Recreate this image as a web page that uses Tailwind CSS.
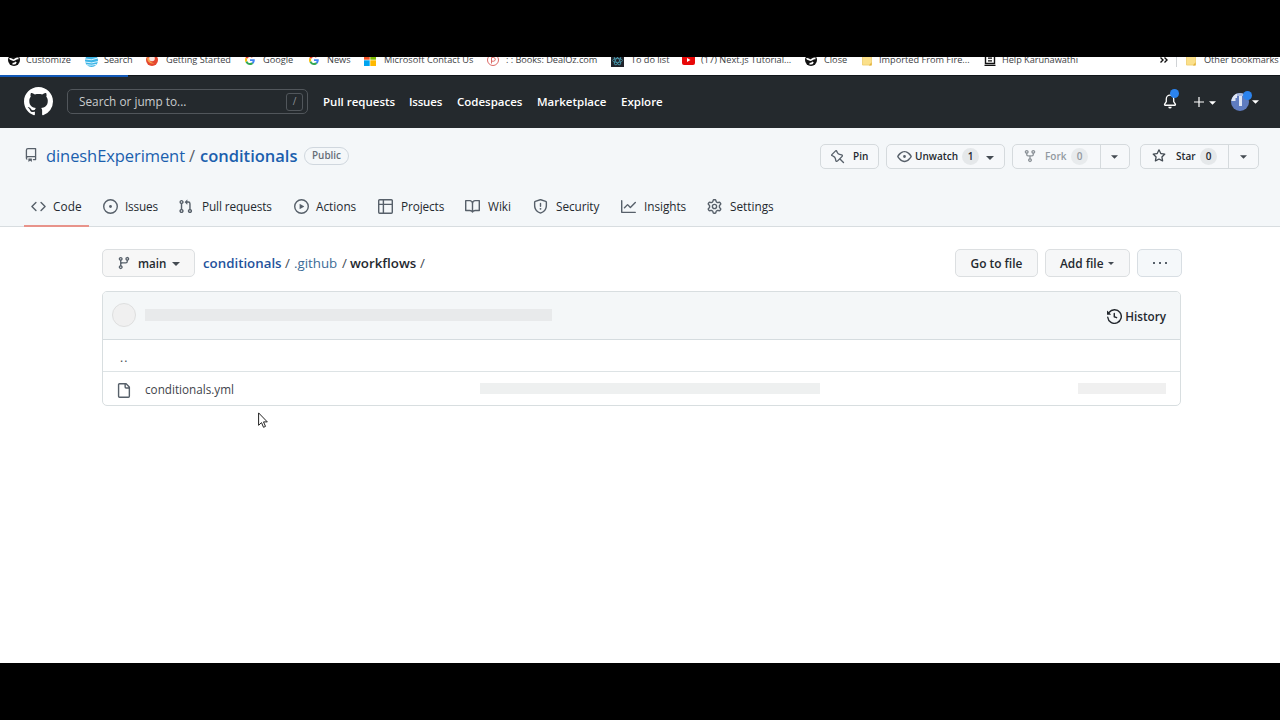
<!DOCTYPE html>
<html lang="en">
<head>
<meta charset="utf-8">
<title>conditionals/.github/workflows</title>
<script src="https://cdn.jsdelivr.net/npm/@tailwindcss/browser@4"></script>
</head>
<body class="w-[1280px] h-[720px] overflow-hidden bg-black font-['Open_Sans','Noto_Sans',sans-serif] text-[#24292f] whitespace-nowrap">
<svg class="hidden">
  <symbol id="globe" viewBox="0 0 12 12"><circle cx="6" cy="6" r="6" fill="#111"/><path d="M1.500 5c1.500-1 3 1.500 4.500 1S8 4 10.500 4.500M4.500 9.500c1.500.5 3-.5 3.500-1.500" fill="none" stroke="#fff" stroke-width="1.800"/></symbol>
  <symbol id="google" viewBox="0 0 48 48"><path fill="#ea4335" d="M24 9.500c3.540 0 6.710 1.220 9.210 3.600l6.850-6.850C35.900 2.380 30.470 0 24 0 14.620 0 6.510 5.380 2.560 13.220l7.980 6.190C12.430 13.720 17.740 9.500 24 9.500z"/><path fill="#4285f4" d="M46.980 24.550c0-1.570-.15-3.090-.38-4.550H24v9.020h12.940c-.58 2.960-2.260 5.480-4.780 7.180l7.730 6c4.510-4.180 7.090-10.360 7.090-17.650z"/><path fill="#fbbc05" d="M10.530 28.590c-.48-1.450-.76-2.990-.76-4.590s.27-3.140.76-4.590l-7.980-6.190C.92 16.460 0 20.120 0 24s.92 7.540 2.560 10.780l7.970-6.190z"/><path fill="#34a853" d="M24 48c6.480 0 11.930-2.130 15.890-5.810l-7.730-6c-2.150 1.450-4.920 2.300-8.160 2.300-6.260 0-11.570-4.220-13.470-9.910l-7.980 6.190C6.510 42.620 14.620 48 24 48z"/></symbol>
  <symbol id="folder" viewBox="0 0 11 12"><path d="M.5 0h10v11.500H.5z" fill="#fbe08a" stroke="#f0cf72"/><path d="M7.500 12l3-3.500V12z" fill="#e3b341"/></symbol>
  <symbol id="caret" viewBox="0 0 8 4"><path d="M0 0h8L4 4z" fill="currentColor"/></symbol>
</svg>

<div class="h-[57px]"></div>

<!-- Bookmarks bar -->
<div class="h-[18px] bg-white overflow-hidden">
  <div class="flex items-center h-[18px] -mt-[6px] text-[9.2px] text-[#3c4043]">
    <svg class="ml-[8px] size-[12px] shrink-0"><use href="#globe"/></svg>
    <span class="ml-[6px] w-[59px]">Customize</span>
    <svg class="size-[13px] shrink-0" viewBox="0 0 13 13"><circle cx="6.500" cy="6.500" r="6.500" fill="#3db5e6"/><path d="M0 5q6 2 13-1M0 8q7 2 13-.5M2 10.800q5 1 9-.4" fill="none" stroke="#d8f3ff"/></svg>
    <span class="ml-[6px] w-[42px] tracking-[-0.1px]">Search</span>
    <svg class="size-[12px] shrink-0" viewBox="0 0 12 12"><circle cx="6" cy="6" r="6" fill="#e5472f"/><path d="M1.500 3a5 5 0 0 0 7 6c-3 0-5-2-5-5z" fill="#f6a04a"/><circle cx="6" cy="4.500" r="2.800" fill="#f6e4e0"/></svg>
    <span class="ml-[8px] w-[79px]">Getting Started</span>
    <svg class="size-[10px] shrink-0"><use href="#google"/></svg>
    <span class="ml-[8px] w-[46px]">Google</span>
    <svg class="size-[10px] shrink-0"><use href="#google"/></svg>
    <span class="ml-[8px] w-[37px]">News</span>
    <svg class="size-[12px] shrink-0" viewBox="0 0 12 12"><path fill="#f25022" d="M0 0h5.700v5.700H0z"/><path fill="#7fba00" d="M6.300 0H12v5.700H6.300z"/><path fill="#00a4ef" d="M0 6.300h5.700V12H0z"/><path fill="#ffb900" d="M6.300 6.300H12V12H6.300z"/></svg>
    <span class="ml-[8px] w-[103px]">Microsoft Contact Us</span>
    <svg class="size-[12px] shrink-0" viewBox="0 0 12 12" fill="none" stroke="#dc6a66"><circle cx="6" cy="6" r="5.500"/><path d="M4.500 9.500V3.500h2.300a1.900 1.900 0 0 1 0 3.700H4.500"/></svg>
    <span class="ml-[7px] w-[105px] tracking-[-0.04px]">: : Books: DealOz.com</span>
    <svg class="size-[13px] shrink-0" viewBox="0 0 13 13"><path d="M0 0h13v13H0z" fill="#20232a"/><g fill="none" stroke="#4aa3b8" stroke-width=".7"><ellipse cx="6.500" cy="6.500" rx="5" ry="2"/><ellipse cx="6.500" cy="6.500" rx="5" ry="2" transform="rotate(60 6.500 6.500)"/><ellipse cx="6.500" cy="6.500" rx="5" ry="2" transform="rotate(120 6.500 6.500)"/></g></svg>
    <span class="ml-[7px] w-[51px] tracking-[-0.04px]">To do list</span>
    <svg class="w-[13px] h-[10px] shrink-0" viewBox="0 0 13 10"><rect width="13" height="10" rx="2" fill="#e80808"/><path d="M5 3l3.500 2L5 7z" fill="#fff"/></svg>
    <span class="ml-[6px] w-[104px]">(17) Next.js Tutorial...</span>
    <svg class="size-[12px] shrink-0"><use href="#globe"/></svg>
    <span class="ml-[7px] w-[38px]">Close</span>
    <svg class="w-[10px] h-[12px] shrink-0"><use href="#folder"/></svg>
    <span class="ml-[7px] w-[105px]">Imported From Fire...</span>
    <svg class="size-[12px] shrink-0" viewBox="0 0 12 12"><path d="M1.500 1.500h9v8h-9z" fill="none" stroke="#111" stroke-width="1.400"/><path d="M4 4.200h4M4 6.800h4M.5 11.300h11" stroke="#111" stroke-width="1.300"/></svg>
    <span class="ml-[6px] w-[158px] tracking-[-0.04px]">Help Karunawathi</span>
    <svg class="w-[8px] h-[6px] shrink-0 -mt-px" viewBox="0 0 8 6" fill="none" stroke="#111" stroke-width="1.400"><path d="M.5.5L3 3 .5 5.500M4.500.5L7 3 4.500 5.500"/></svg>
    <span class="ml-[8px] w-px h-[14px] bg-[#d0d3d6]"></span>
    <svg class="ml-[9px] w-[10px] h-[12px] shrink-0"><use href="#folder"/></svg>
    <span class="ml-[8px] tracking-[-0.05px]">Other bookmarks</span>
  </div>
</div>

<!-- Global header -->
<header class="relative flex items-center h-[53px] bg-[#24292d] border-t border-[#11161a] pb-px text-white">
  <div class="absolute -top-px left-0 w-[128px] h-[2px] bg-[#1259b8]"></div>
  <svg class="ml-[24px] size-[29px] shrink-0" viewBox="0 0 16 16" fill="#fff"><path d="M8 0C3.580 0 0 3.580 0 8c0 3.540 2.290 6.530 5.470 7.590.4.070.55-.17.55-.38 0-.19-.01-.82-.01-1.490-2.010.37-2.530-.49-2.690-.94-.09-.23-.48-.94-.82-1.130-.28-.15-.68-.52-.01-.53.63-.01 1.080.58 1.230.82.72 1.210 1.870.87 2.330.66.070-.52.28-.87.51-1.070-1.780-.2-3.640-.89-3.640-3.950 0-.87.31-1.590.82-2.150-.08-.2-.36-1.020.08-2.120 0 0 .67-.21 2.200.82.64-.18 1.320-.27 2-.27s1.360.09 2 .27c1.530-1.040 2.200-.82 2.200-.82.44 1.100.16 1.920.08 2.120.51.56.82 1.270.82 2.150 0 3.070-1.870 3.750-3.650 3.950.29.25.54.73.54 1.480 0 1.070-.01 1.930-.01 2.200 0 .21.15.46.55.38A8.010 8.010 0 0 0 16 8c0-4.420-3.580-8-8-8z"/></svg>
  <div class="ml-[14px] w-[241px] h-[25px] flex items-center justify-between rounded-[5px] border border-[#51565b] pl-[11px] pr-[4px]">
    <span class="pt-px text-[11.8px] text-[#c9ccce]">Search or jump to...</span>
    <span class="w-[17px] h-[18px] flex items-center justify-center rounded-[3px] border border-[#51565b] text-[10px] text-[#8d9297]">/</span>
  </div>
  <nav class="ml-[15px] pt-px flex text-[11.5px] font-semibold">
    <span class="w-[86px]">Pull requests</span>
    <span class="w-[48px] tracking-[-0.2px]">Issues</span>
    <span class="w-[80px]">Codespaces</span>
    <span class="w-[84px]">Marketplace</span>
    <span class="w-[42px]">Explore</span>
  </nav>
  <div class="ml-auto mr-[21px] flex items-center">
    <div class="relative w-[14px] h-[15px]">
      <svg class="-ml-px w-[14px] h-[15px]" viewBox="0 0 16 16" fill="#fff"><path d="M8 16a2 2 0 0 0 1.985-1.750c.017-.137-.097-.25-.235-.25h-3.500c-.138 0-.252.113-.235.250A2 2 0 0 0 8 16ZM3 5a5 5 0 0 1 10 0v2.947c0 .05.015.098.042.139l1.703 2.555A1.519 1.519 0 0 1 13.482 13H2.518a1.516 1.516 0 0 1-1.263-2.360l1.703-2.554A.255.255 0 0 0 3 7.947Zm5-3.500A3.500 3.500 0 0 0 4.500 5v2.947c0 .346-.102.683-.294.970l-1.703 2.556a.017.017 0 0 0-.003.010l.001.006c0 .002.002.004.004.006l.006.004.007.001h10.964l.007-.001.006-.004.004-.006.001-.007a.017.017 0 0 0-.003-.01l-1.703-2.554a1.745 1.745 0 0 1-.294-.970V5A3.500 3.500 0 0 0 8 1.500Z"/></svg>
      <span class="absolute -top-[5px] left-[6px] size-[9px] rounded-full bg-[#2b83ee]"></span>
    </div>
    <svg class="ml-[16px] mt-px size-[10px]" viewBox="0 0 10 10" stroke="#fff" stroke-width="1.200"><path d="M5 0v10M0 5h10"/></svg>
    <svg class="ml-[5px] mt-[2px] w-[7px] h-[4px]"><use href="#caret"/></svg>
    <div class="relative ml-[15px] mt-px size-[18px]">
      <svg class="size-[18px]" viewBox="0 0 18 18"><circle cx="9" cy="9" r="9" fill="#5f7cc0"/><path d="M.5 7A9 9 0 0 1 6 .6V5H4.500v3H.3zM8 3h3v10H8z" fill="#dfe6f5"/><path d="M6 .6A9 9 0 0 1 13 1v2H6z" fill="#a9b9de"/></svg>
      <span class="absolute -top-[2px] left-[12px] size-[9px] rounded-full bg-[#2b83ee]"></span>
    </div>
    <svg class="ml-[3px] w-[7px] h-[4px]"><use href="#caret"/></svg>
  </div>
</header>

<!-- Repository header -->
<section class="h-[99px] bg-[#f4f7f9] border-b border-[#d8dde0]">
  <div class="flex items-center h-[57px] pl-[25px] pr-[21px]">
    <svg class="-ml-px mr-px size-[14px] shrink-0 -mt-[3px]" viewBox="0 0 16 16" fill="#57606a"><path d="M2 2.500A2.500 2.500 0 0 1 4.500 0h8.750a.75.75 0 0 1 .75.75v12.500a.75.75 0 0 1-.75.75h-2.500a.75.75 0 0 1 0-1.500h1.750v-2h-8a1 1 0 0 0-.714 1.700.75.75 0 1 1-1.072 1.050A2.495 2.495 0 0 1 2 11.500Zm10.500-1h-8a1 1 0 0 0-1 1v6.708A2.486 2.486 0 0 1 4.500 9h8ZM5 12.250a.25.25 0 0 1 .25-.25h3.500a.25.25 0 0 1 .25.25v3.250a.25.25 0 0 1-.4.200l-1.450-1.087a.249.249 0 0 0-.3 0L5.400 15.700a.25.25 0 0 1-.4-.2Z"/></svg>
    <div class="ml-[7px] flex text-[16.5px] text-[#1b5fae]">
      <span class="w-[143px] tracking-[-0.08px]">dineshExperiment</span>
      <span class="w-[11px] text-[#57606a]">/</span>
      <span class="w-[98px] font-semibold">conditionals</span>
    </div>
    <span class="ml-[6px] -mt-[2px] w-[45px] h-[18px] flex items-center justify-center rounded-full border border-[#d0d7de] text-[9.900px] font-semibold text-[#666e77]">Public</span>

    <div class="ml-auto flex items-center text-[10px] font-semibold">
      <div class="w-[59px] h-[25px] flex items-center rounded-[5px] border border-[#d5dadd] bg-[#f6f8fa] pl-[10px]">
        <svg class="size-[14px] shrink-0" viewBox="0 0 16 16" fill="#57606a"><path d="M4.456.734a1.750 1.750 0 0 1 2.826.504l.613 1.327a3.080 3.080 0 0 0 2.084 1.707l2.454.584c1.332.317 1.800 1.972.832 2.940L11.060 10l3.720 3.720a.75.75 0 1 1-1.060 1.060L10 11.060l-2.204 2.205c-.968.968-2.623.5-2.940-.832l-.584-2.454a3.080 3.080 0 0 0-1.707-2.084l-1.327-.613a1.750 1.750 0 0 1-.504-2.826ZM5.920 1.866a.25.25 0 0 0-.404-.072L1.794 5.516a.25.25 0 0 0 .072.404l1.328.613A4.582 4.582 0 0 1 5.730 9.630l.584 2.454a.25.25 0 0 0 .42.120l5.470-5.470a.25.25 0 0 0-.12-.420L9.630 5.730a4.581 4.581 0 0 1-3.098-2.537Z"/></svg>
        <span class="ml-[8px]">Pin</span>
      </div>
      <div class="ml-[7px] w-[119px] h-[25px] flex items-center rounded-[5px] border border-[#d5dadd] bg-[#f6f8fa] pl-[10px]">
        <svg class="size-[15px] shrink-0" viewBox="0 0 16 16" fill="#57606a"><path d="M8 2c1.981 0 3.671.992 4.933 2.078 1.270 1.091 2.187 2.345 2.637 3.023a1.620 1.620 0 0 1 0 1.798c-.45.678-1.367 1.932-2.637 3.023C11.670 13.008 9.981 14 8 14c-1.981 0-3.671-.992-4.933-2.078C1.797 10.830.88 9.576.43 8.898a1.620 1.620 0 0 1 0-1.798c.45-.677 1.367-1.931 2.637-3.022C4.330 2.992 6.019 2 8 2ZM1.679 7.932a.12.12 0 0 0 0 .136c.411.622 1.241 1.750 2.366 2.717C5.176 11.758 6.527 12.500 8 12.500c1.473 0 2.825-.742 3.955-1.715 1.124-.967 1.954-2.096 2.366-2.717a.12.12 0 0 0 0-.136c-.412-.621-1.242-1.750-2.366-2.717C10.824 4.242 9.473 3.500 8 3.500c-1.473 0-2.825.742-3.955 1.715-1.124.967-1.954 2.096-2.366 2.717ZM8 9.500a1.500 1.500 0 1 1 0-3 1.500 1.500 0 0 1 0 3Z"/></svg>
        <span class="ml-[3px] w-[47px]">Unwatch</span>
        <span class="size-[17px] rounded-full bg-[#e5e8ea] flex items-center justify-center">1</span>
        <svg class="ml-[7px] mt-[2px] w-[8px] h-[4px] text-[#444b52]"><use href="#caret"/></svg>
      </div>
      <div class="ml-[7px] w-[118px] h-[25px] flex items-center rounded-[5px] border border-[#d5dadd] bg-[#f6f8fa] text-[#9299a0]">
        <div class="w-[88px] h-full flex items-center border-r border-[#d5dadd] pl-[10px]">
          <svg class="mr-px size-[14px] shrink-0 -mt-px" viewBox="0 0 16 16" fill="#8c9298"><path d="M5 5.372v.878c0 .414.336.75.75.75h4.500a.75.75 0 0 0 .75-.75v-.878a2.250 2.250 0 1 1 1.500 0v.878a2.250 2.250 0 0 1-2.250 2.250h-1.500v2.128a2.251 2.251 0 1 1-1.500 0V8.500h-1.500A2.250 2.250 0 0 1 3.500 6.250v-.878a2.250 2.250 0 1 1 1.500 0ZM5 3.250a.75.75 0 1 0-1.500 0 .75.75 0 0 0 1.500 0Zm6.750.75a.75.75 0 1 0 0-1.500.75.75 0 0 0 0 1.500Zm-3 8.750a.75.75 0 1 0-1.500 0 .75.75 0 0 0 1.500 0Z"/></svg>
          <span class="ml-[7px] w-[26px]">Fork</span>
          <span class="size-[17px] rounded-full bg-[#e8ebed] flex items-center justify-center">0</span>
        </div>
        <svg class="ml-[10px] mt-px w-[7px] h-[4px] text-[#444b52]"><use href="#caret"/></svg>
      </div>
      <div class="ml-[10px] w-[119px] h-[25px] flex items-center rounded-[5px] border border-[#d5dadd] bg-[#f6f8fa]">
        <div class="w-[88px] h-full flex items-center border-r border-[#d5dadd] pl-[11px]">
          <svg class="size-[14px] shrink-0 -mt-px" viewBox="0 0 16 16" fill="#444c54"><path d="M8 .25a.75.75 0 0 1 .673.418l1.882 3.815 4.210.612a.75.75 0 0 1 .416 1.279l-3.046 2.970.719 4.192a.751.751 0 0 1-1.088.791L8 12.347l-3.766 1.980a.75.75 0 0 1-1.088-.790l.72-4.194L.818 6.374a.75.75 0 0 1 .416-1.280l4.210-.611L7.327.668A.75.75 0 0 1 8 .25Zm0 2.445L6.615 5.500a.75.75 0 0 1-.564.410l-3.097.450 2.240 2.184a.75.75 0 0 1 .216.664l-.528 3.084 2.769-1.456a.75.75 0 0 1 .698 0l2.770 1.456-.53-3.084a.75.75 0 0 1 .216-.664l2.240-2.183-3.096-.450a.75.75 0 0 1-.564-.410L8 2.694Z"/></svg>
          <span class="ml-[10px] w-[24px]">Star</span>
          <span class="size-[17px] rounded-full bg-[#e5e8ea] flex items-center justify-center">0</span>
        </div>
        <svg class="ml-[11px] mt-px w-[7px] h-[4px] text-[#444b52]"><use href="#caret"/></svg>
      </div>
    </div>
  </div>

  <nav class="flex h-[42px] pl-[24px] text-[11.8px]">
    <div class="w-[65px] h-[42px] pl-[7px] pt-[2px] flex items-center border-b-2 border-[#e8938a]">
      <svg class="size-[15px] shrink-0" viewBox="0 0 16 16" fill="#57606a"><path d="m11.280 3.220 4.250 4.250a.75.75 0 0 1 0 1.060l-4.250 4.250a.749.749 0 1 1-1.060-1.060L13.940 8l-3.720-3.720a.749.749 0 1 1 1.060-1.060Zm-6.560 0a.751.751 0 0 1 1.060 1.060L2.060 8l3.720 3.720a.749.749 0 1 1-1.060 1.060L.47 8.530a.75.75 0 0 1 0-1.060Z"/></svg>
      <span class="ml-[7px] pt-px tracking-[0.1px]">Code</span>
    </div>
    <div class="flex items-center ml-[14px] w-[76px]">
      <svg class="size-[15px] shrink-0" viewBox="0 0 16 16" fill="#57606a"><path d="M8 9.500a1.500 1.500 0 1 0 0-3 1.500 1.500 0 0 0 0 3Z"/><path d="M8 0a8 8 0 1 1 0 16A8 8 0 0 1 8 0ZM1.500 8a6.500 6.500 0 1 0 13 0 6.500 6.500 0 0 0-13 0Z"/></svg>
      <span class="ml-[7px] pt-px tracking-[-0.2px]">Issues</span>
    </div>
    <div class="flex items-center w-[115px]">
      <svg class="-ml-px mr-px size-[15px] shrink-0" viewBox="0 0 16 16" fill="#57606a"><path d="M1.500 3.250a2.250 2.250 0 1 1 3 2.122v5.256a2.251 2.251 0 1 1-1.500 0V5.372A2.250 2.250 0 0 1 1.500 3.250Zm5.677-.177L9.573.677A.25.25 0 0 1 10 .854V2.500h1A2.500 2.500 0 0 1 13.500 5v5.628a2.251 2.251 0 1 1-1.500 0V5a1 1 0 0 0-1-1h-1v1.646a.25.25 0 0 1-.427.177L7.177 3.427a.25.25 0 0 1 0-.354ZM3.750 2.500a.75.75 0 1 0 0 1.500.75.75 0 0 0 0-1.500Zm0 9.500a.75.75 0 1 0 0 1.500.75.75 0 0 0 0-1.500Zm8.250.75a.75.75 0 1 0 1.500 0 .75.75 0 0 0-1.500 0Z"/></svg>
      <span class="ml-[8px] pt-px tracking-[-0.12px]">Pull requests</span>
    </div>
    <div class="flex items-center w-[84px]">
      <svg class="size-[15px] shrink-0" viewBox="0 0 16 16" fill="#57606a"><path d="M8 0a8 8 0 1 1 0 16A8 8 0 0 1 8 0ZM1.500 8a6.500 6.500 0 1 0 13 0 6.500 6.500 0 0 0-13 0Zm4.879-2.773 4.264 2.559a.25.25 0 0 1 0 .428l-4.264 2.559A.25.25 0 0 1 6 10.559V5.442a.25.25 0 0 1 .379-.215Z"/></svg>
      <span class="ml-[7px] pt-px">Actions</span>
    </div>
    <div class="flex items-center w-[87px]">
      <svg class="size-[15px] shrink-0" viewBox="0 0 16 16" fill="#57606a"><path d="M0 1.750C0 .784.784 0 1.750 0h12.500C15.216 0 16 .784 16 1.750v12.500A1.750 1.750 0 0 1 14.250 16H1.750A1.750 1.750 0 0 1 0 14.250ZM6.500 6.500v8h7.750a.25.25 0 0 0 .25-.25V6.500Zm8-1.500V1.750a.25.25 0 0 0-.25-.25H6.500V5Zm-13 1.500v7.750c0 .138.112.25.250.25H5v-8ZM5 5V1.500H1.750a.25.25 0 0 0-.25.25V5Z"/></svg>
      <span class="ml-[8px] pt-px tracking-[-0.12px]">Projects</span>
    </div>
    <div class="flex items-center w-[69px]">
      <svg class="size-[15px] shrink-0" viewBox="0 0 16 16" fill="#57606a"><path d="M0 1.750A.75.75 0 0 1 .75 1h4.253c1.227 0 2.317.59 3 1.501A3.743 3.743 0 0 1 11.006 1h4.245a.75.75 0 0 1 .75.75v10.500a.75.75 0 0 1-.75.75h-4.507a2.250 2.250 0 0 0-1.591.659l-.622.621a.75.75 0 0 1-1.060 0l-.622-.621A2.250 2.250 0 0 0 5.258 13H.75a.75.75 0 0 1-.75-.75Zm7.251 10.324.004-5.073-.002-2.253A2.250 2.250 0 0 0 5.003 2.500H1.500v9h3.757a3.750 3.750 0 0 1 1.994.574ZM8.755 4.750l-.004 7.322a3.752 3.752 0 0 1 1.992-.572H14.500v-9h-3.495a2.250 2.250 0 0 0-2.250 2.250Z"/></svg>
      <span class="ml-[8px] pt-px">Wiki</span>
    </div>
    <div class="flex items-center w-[87px]">
      <svg class="-ml-px size-[15px] shrink-0" viewBox="0 0 16 16" fill="#57606a"><path d="m8.533.133 5.250 1.680A1.750 1.750 0 0 1 15 3.480V7c0 1.566-.32 3.182-1.303 4.682-.983 1.498-2.585 2.813-5.032 3.855a1.697 1.697 0 0 1-1.330 0c-2.447-1.042-4.049-2.357-5.032-3.855C1.320 10.182 1 8.566 1 7V3.480a1.750 1.750 0 0 1 1.217-1.667l5.250-1.680a1.748 1.748 0 0 1 1.066 0Zm-.61 1.429.001.001-5.250 1.680a.251.251 0 0 0-.174.237V7c0 1.360.275 2.666 1.057 3.859.784 1.194 2.121 2.342 4.366 3.298a.196.196 0 0 0 .154 0c2.245-.957 3.582-2.103 4.366-3.297C13.225 9.666 13.500 8.358 13.500 7V3.480a.25.25 0 0 0-.174-.238l-5.250-1.680a.25.25 0 0 0-.153 0ZM8.750 4.750v3a.75.75 0 0 1-1.500 0v-3a.75.75 0 0 1 1.500 0ZM9 10.500a1 1 0 1 1-2 0 1 1 0 0 1 2 0Z"/></svg>
      <span class="ml-[8px] pt-px tracking-[-0.08px]">Security</span>
    </div>
    <div class="flex items-center w-[86px]">
      <svg class="size-[15px] shrink-0" viewBox="0 0 16 16" fill="#57606a"><path d="M1.500 1.750V13.500h13.750a.75.75 0 0 1 0 1.500H.75a.75.75 0 0 1-.75-.75V1.750a.75.75 0 0 1 1.500 0Zm14.280 2.530-5.250 5.250a.75.75 0 0 1-1.060 0L7 7.060 4.280 9.780a.751.751 0 1 1-1.060-1.060l3.250-3.250a.75.75 0 0 1 1.060 0L10 7.940l4.720-4.720a.751.751 0 1 1 1.060 1.060Z"/></svg>
      <span class="ml-[8px] pt-px tracking-[-0.05px]">Insights</span>
    </div>
    <div class="flex items-center">
      <svg class="size-[15px] shrink-0" viewBox="0 0 16 16" fill="#57606a"><path d="M8 0a8.200 8.200 0 0 1 .701.031C9.444.095 9.990.645 10.160 1.290l.288 1.107c.018.066.079.158.212.224.231.114.454.243.668.386.123.082.233.090.299.071l1.103-.303c.644-.176 1.392.021 1.820.630.270.385.506.792.704 1.218.315.675.111 1.422-.364 1.891l-.814.806c-.049.048-.098.147-.088.294.016.257.016.515 0 .772-.010.147.038.246.088.294l.814.806c.475.469.679 1.216.364 1.891a7.977 7.977 0 0 1-.704 1.217c-.428.610-1.176.807-1.820.630l-1.102-.302c-.067-.019-.177-.011-.3.071a5.909 5.909 0 0 1-.668.386c-.133.066-.194.158-.211.224l-.290 1.106c-.168.646-.715 1.196-1.458 1.260a8.006 8.006 0 0 1-1.402 0c-.743-.064-1.289-.614-1.458-1.260l-.289-1.106c-.018-.066-.079-.158-.212-.224a5.738 5.738 0 0 1-.668-.386c-.123-.082-.233-.090-.299-.071l-1.103.303c-.644.176-1.392-.021-1.820-.630a8.120 8.120 0 0 1-.704-1.218c-.315-.675-.111-1.422.363-1.891l.815-.806c.050-.048.098-.147.088-.294a6.214 6.214 0 0 1 0-.772c.010-.147-.038-.246-.088-.294l-.815-.806C.635 6.045.431 5.298.746 4.623a7.920 7.920 0 0 1 .704-1.217c.428-.610 1.176-.807 1.820-.630l1.102.302c.067.019.177.011.3-.071.214-.143.437-.272.668-.386.133-.066.194-.158.211-.224l.290-1.106C6.009.645 6.556.095 7.299.030 7.530.010 7.764 0 8 0Zm-.571 1.525c-.036.003-.108.036-.137.146l-.289 1.105c-.147.561-.549.967-.998 1.189-.173.086-.340.183-.500.290-.417.278-.970.423-1.529.270l-1.103-.303c-.109-.030-.175.016-.195.045-.220.312-.412.644-.573.990-.014.031-.021.110.059.190l.815.806c.411.406.562.957.530 1.456a4.709 4.709 0 0 0 0 .582c.032.499-.119 1.050-.530 1.456l-.815.806c-.081.080-.073.159-.059.190.162.346.353.677.573.989.020.030.085.076.195.046l1.102-.303c.560-.153 1.113-.008 1.530.270.161.107.328.204.501.290.447.222.850.629.997 1.189l.289 1.105c.029.109.101.143.137.146a6.600 6.600 0 0 0 1.142 0c.036-.003.108-.036.137-.146l.289-1.105c.147-.561.549-.967.998-1.189.173-.086.340-.183.500-.290.417-.278.970-.423 1.529-.270l1.103.303c.109.029.175-.016.195-.045.220-.313.411-.644.573-.990.014-.031.021-.110-.059-.190l-.815-.806c-.411-.406-.562-.957-.530-1.456a4.709 4.709 0 0 0 0-.582c-.032-.499.119-1.050.530-1.456l.815-.806c.081-.080.073-.159.059-.190a6.464 6.464 0 0 0-.573-.989c-.020-.030-.085-.076-.195-.046l-1.102.303c-.560.153-1.113.008-1.530-.270a4.440 4.440 0 0 0-.501-.290c-.447-.222-.850-.629-.997-1.189l-.289-1.105c-.029-.110-.101-.143-.137-.146a6.600 6.600 0 0 0-1.142 0ZM11 8a3 3 0 1 1-6 0 3 3 0 0 1 6 0ZM9.500 8a1.500 1.500 0 1 0-3.001.001A1.500 1.500 0 0 0 9.500 8Z"/></svg>
      <span class="ml-[8px] pt-px">Settings</span>
    </div>
  </nav>
</section>

<!-- File browser -->
<main class="h-[436px] bg-white pt-[22px] pl-[102px] pr-[99px] flex flex-col">
  <div class="flex items-center h-[28px] text-[11.9px] font-semibold">
    <div class="w-[93px] h-[28px] flex items-center rounded-[5px] border border-[#dcdfe1] bg-[#f7f7f7] pl-[14px] text-[11.6px]">
      <svg class="size-[14px] shrink-0" viewBox="0 0 16 16" fill="#57606a"><path d="M9.500 3.250a2.250 2.250 0 1 1 3 2.122V6A2.500 2.500 0 0 1 10 8.500H6a1 1 0 0 0-1 1v1.128a2.251 2.251 0 1 1-1.500 0V5.372a2.250 2.250 0 1 1 1.500 0v1.836A2.493 2.493 0 0 1 6 7h4a1 1 0 0 0 1-1v-.628A2.250 2.250 0 0 1 9.500 3.250Zm-6 0a.75.75 0 1 0 1.500 0 .75.75 0 0 0-1.500 0Zm8.250-.75a.75.75 0 1 0 0 1.500.75.75 0 0 0 0-1.500ZM4.250 12a.75.75 0 1 0 0 1.500.75.75 0 0 0 0-1.500Z"/></svg>
      <span class="ml-[7px] pt-px">main</span>
      <svg class="ml-[6px] mt-[2px] w-[8px] h-[4px] text-[#444b52]"><use href="#caret"/></svg>
    </div>
    <div class="ml-[8px] pt-[2px] flex text-[13.3px]">
      <span class="w-[82px] text-[#1f529c]">conditionals</span>
      <span class="w-[9px] font-normal text-[#444b52]">/</span>
      <span class="w-[48px] font-normal text-[#3d6b96]">.github</span>
      <span class="w-[8px] font-normal text-[#444b52]">/</span>
      <span class="w-[70px]">workflows</span>
      <span class="font-normal text-[#444b52]">/</span>
    </div>
    <div class="ml-auto w-[83px] h-[28px] pt-px flex items-center justify-center rounded-[5px] border border-[#dcdfe1] bg-[#f6f7f8]">Go to file</div>
    <div class="ml-[7px] w-[85px] h-[28px] pt-px flex items-center rounded-[5px] border border-[#dcdfe1] bg-[#f6f7f8] pl-[14px]">Add file
      <svg class="ml-[4px] -mt-px w-[6px] h-[3px] text-[#444b52]"><use href="#caret"/></svg>
    </div>
    <div class="ml-[7px] -mr-px w-[45px] h-[28px] flex items-center justify-center gap-[4px] rounded-[5px] border border-[#d8dee3] bg-[#f5f8fa]">
      <span class="size-[2px] bg-[#57606a]"></span><span class="size-[2px] bg-[#57606a]"></span><span class="size-[2px] bg-[#57606a]"></span>
    </div>
  </div>

  <div class="mt-[14px] h-[115px] rounded-[5px] border border-[#d8dee0] overflow-hidden">
    <div class="h-[48px] flex items-center bg-[#f4f7f8] border-b border-[#d5dcdf] pl-[9px] pr-[14px]">
      <span class="size-[24px] -mt-px rounded-full border border-[#dedfdf] bg-[#f0f0f0]"></span>
      <span class="ml-[9px] -mt-px w-[407px] h-[12px] bg-[#e8eaeb]"></span>
      <svg class="ml-auto mt-px size-[15px]" viewBox="0 0 16 16" fill="#24292f"><path d="m.427 1.927 1.215 1.215a8.002 8.002 0 1 1-1.600 5.685.75.75 0 1 1 1.493-.154 6.500 6.500 0 1 0 1.180-4.458l1.358 1.358A.25.25 0 0 1 3.896 6H.250A.25.25 0 0 1 0 5.750V2.104a.25.25 0 0 1 .427-.177ZM7.750 4a.75.75 0 0 1 .750.750v2.992l2.028.812a.75.75 0 0 1-.557 1.392l-2.500-1A.751.751 0 0 1 7 8.250v-3.500A.75.75 0 0 1 7.750 4Z"/></svg>
      <span class="ml-[3px] mt-[3px] text-[11.7px] font-semibold">History</span>
    </div>
    <div class="h-[32px] flex items-center border-b border-[#dde3e5] pl-[17px] pt-[4px] text-[12px] tracking-[1px] text-[#444b52]">..</div>
    <div class="h-[33px] flex items-center pl-[13px] pr-[14px]">
      <svg class="size-[15px] shrink-0 mt-[3px]" viewBox="0 0 16 16" fill="#57606a"><path d="M2 1.750C2 .784 2.784 0 3.750 0h6.586c.464 0 .909.184 1.237.513l2.914 2.914c.329.328.513.773.513 1.237v9.586A1.750 1.750 0 0 1 13.250 16h-9.500A1.750 1.750 0 0 1 2 14.250Zm1.750-.250a.25.25 0 0 0-.250.250v12.500c0 .138.112.250.250.250h9.500a.25.25 0 0 0 .250-.250V6h-2.750A1.750 1.750 0 0 1 9 4.250V1.500Zm6.750.062V4.250c0 .138.112.250.250.250h2.688l-.011-.013-2.914-2.914-.013-.011Z"/></svg>
      <span class="ml-[14px] pt-[2px] w-[335px] text-[11.7px] text-[#3f454b]">conditionals.yml</span>
      <span class="w-[340px] h-[11px] bg-[#eef0f0]"></span>
      <span class="ml-auto w-[88px] h-[11px] bg-[#f0f0f0]"></span>
    </div>
  </div>
</main>

<!-- Mouse pointer -->
<svg class="absolute left-[258px] top-[412px] w-[10px] h-[17px]" viewBox="0 0 10 17"><path d="M.6.900v12.400l2.900-2.700 2 4.700 2-.9-2-4.500h3.800z" fill="#fff" stroke="#222" stroke-width="1"/></svg>
</body>
</html>
